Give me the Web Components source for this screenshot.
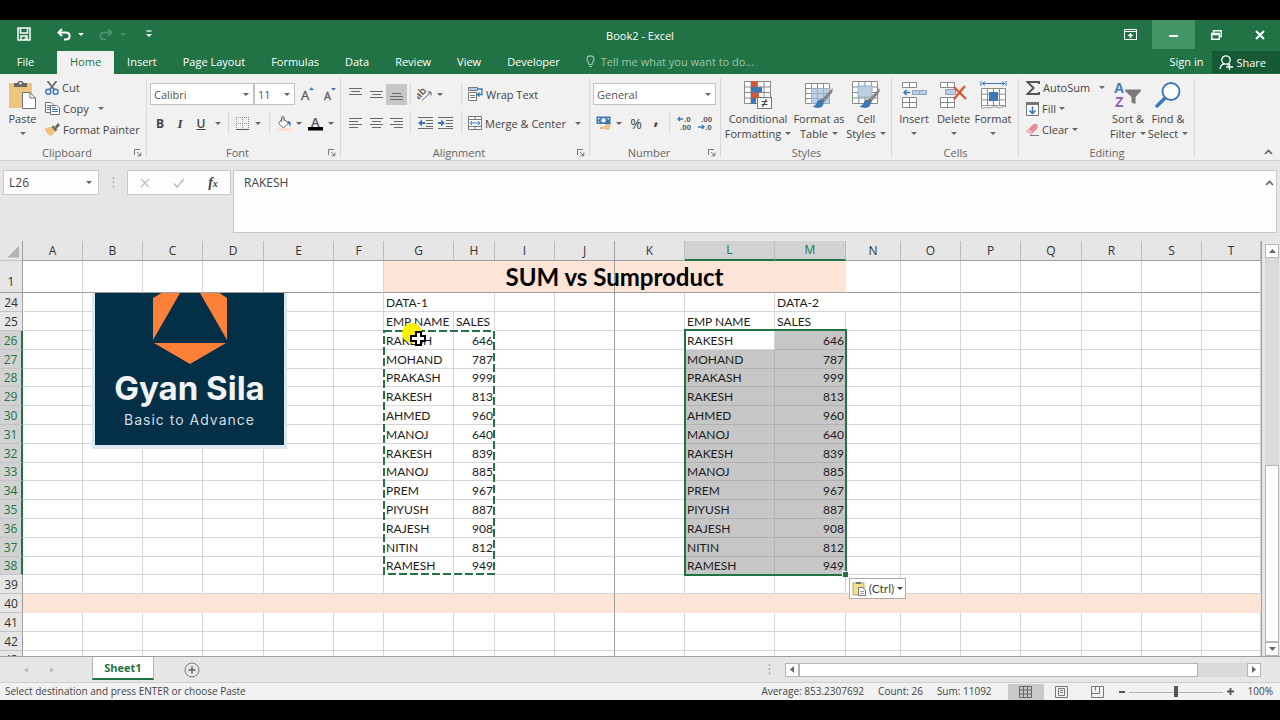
<!DOCTYPE html>
<html lang="en">
<head>
<meta charset="utf-8">
<title>Book2 - Excel</title>
<style>
html, body { margin: 0; height: 100%; }
body { background: #000; font: 11px/15px "Open Sans", "Noto Sans", sans-serif; color: #444; }
</style>
</head>
<body>
<xl-app></xl-app>
<script>
const BASE = `
:host,*{box-sizing:border-box}
button,select,input,textarea{font:inherit;color:inherit;margin:0;border:0;padding:0;background:none;border-radius:0;outline:0}
button{display:flex;align-items:center;justify-content:center}
a{color:inherit;text-decoration:none}
svg{display:block}
.arrow{flex:none;display:block;width:0;height:0;border:3px solid transparent;border-top-color:#666;border-bottom:0}
`;
function define(name, css, html) {
  customElements.define(name, class extends HTMLElement {
    constructor() { super(); this.attachShadow({ mode: 'open' }); }
    connectedCallback() {
      const body = typeof html === 'function' ? html(this) : html;
      this.shadowRoot.innerHTML = `<style>${BASE}${css}</style>${body}`;
    }
  });
}

const B = '#3c78b8';
const lines = (list, c = '#6a6a6a') => list.map(([x1, x2, y]) => `<path d="M${x1} ${y}H${x2}" stroke="${c}" fill="none"/>`).join('');
const grid = (x, y, w, h, nx, ny, c = '#8a8a8a') => {
  let d = '';
  for (let i = 0; i <= nx; i++) d += `M${x + w * i / nx} ${y}V${y + h}`;
  for (let i = 0; i <= ny; i++) d += `M${x} ${y + h * i / ny}H${x + w}`;
  return `<rect x="${x}" y="${y}" width="${w}" height="${h}" fill="#fff"/><path d="${d}" stroke="${c}" fill="none"/>`;
};
const brush = `<path d="M27.500 7L18.500 16.500L20.500 19.500L27.500 11Z" fill="#858585"/><path d="M17.500 17L15.500 19.500L18 22L20.500 19.500Z" fill="#707070"/><path d="M15.500 18.500C11 18.500 13 24 7.500 25.500C12 28 19 27.500 18.500 21.500Z" fill="${B}"/>`;
const ICONS = {
  save: [14, 14, `<path d="M1 1H13V13H1Z M3.500 1V6H10.500V1 M4 13V9H10V13 M8.500 10.500V13" fill="none" stroke="#fff" stroke-width="1.500"/>`],
  undo: [14, 13, `<path d="M5 1L1.500 4.500L5 8M2 4.500H8.500C14 4.500 14 11.500 8.500 11.500H7" fill="none" stroke="#fff" stroke-width="2"/>`],
  redo: [14, 13, `<path d="M9 1L12.500 4.500L9 8M12 4.500H5.500C0 4.500 0 11.500 5.500 11.500H7" fill="none" stroke="#4a8f69" stroke-width="2"/>`],
  customize: [6, 8, `<path d="M.5 1H5.500" stroke="#fff" stroke-width="1.200"/><path d="M0 4H6L3 7Z" fill="#fff"/>`],
  display: [13, 11, `<path d="M.5 .5H12.500V10.500H.5ZM.5 2.500H12.500" fill="none" stroke="#fff"/><path d="M6.500 4L3.500 7H5.700V9H7.300V7H9.500Z" fill="#fff"/>`],
  minimize: [9, 8, `<path d="M0 5H9" stroke="#fff" stroke-width="2"/>`],
  restore: [11, 10, `<path d="M2.500 3V.75H10.250V6.500H8.500M.75 3.500H8.250V9.250H.75ZM.75 4.500H8.250" fill="none" stroke="#fff" stroke-width="1.400"/>`],
  close: [10, 10, `<path d="M1 1L9 9M9 1L1 9" stroke="#fff" stroke-width="2"/>`],
  bulb: [9, 13, `<path d="M3 9.500C3 7.500 1 6.500 1 4.300A3.500 3.500 0 0 1 8 4.300C8 6.500 6 7.500 6 9.500ZM3 11.500H6" fill="none" stroke="#9cc5ae" stroke-width="1.200"/>`],
  person: [14, 15, `<circle cx="7" cy="5" r="4.200" fill="none" stroke="#fff" stroke-width="1.300"/><path d="M1 14C1.500 10.500 3.500 9 5.500 9M8.500 9L10 10.500M7 12H14M10.500 8.500V15" fill="none" stroke="#fff" stroke-width="1.300"/>`],
  paste: [27, 28, `<rect x="0" y="2" width="23" height="25" rx="1" fill="#ecc47c"/><path d="M5 2H8.500C8.500 -.8 14.500 -.8 14.500 2H18V6H5Z" fill="#666"/><circle cx="11.500" cy="2.300" r="1.200" fill="#f1f1f1"/><path d="M13.500 11.500H21L26.500 17V27.500H13.500Z" fill="#fff" stroke="#707070"/><path d="M21 11.500V17H26.500" fill="none" stroke="#707070"/>`],
  cut: [14, 14, `<path d="M2.500 0L9.500 9M11.500 0L4.500 9" stroke="#6a6a6a" stroke-width="1.800"/><circle cx="3.200" cy="10.800" r="2.500" fill="none" stroke="${B}" stroke-width="1.400"/><circle cx="10.600" cy="10.800" r="2.500" fill="none" stroke="${B}" stroke-width="1.400"/>`],
  copy: [15, 13, `<path d="M.5 .5H6L8 2.500V10.500H.5Z" fill="#fff" stroke="#707070"/><path d="M2 3.500H5M2 5.500H5M2 7.500H5" stroke="${B}"/><path d="M5.500 3.500H11.500L14.500 6V12.500H5.500Z" fill="#fff" stroke="#707070"/><path d="M7 7.500H13M7 9.500H13M7 5.500H10.500" stroke="${B}"/>`],
  painter: [15, 13, `<path d="M0 5L5 8L7.500 12.500L4 12.500L0 7Z M1 5L6.500 3.500L11 8L7 12Z" fill="#ecc47c"/><path d="M6.500 4L8.500 2.500L12.500 6.500L10.500 8.500Z M10 3.500L13 0L15 2L12 5.500Z" fill="#666"/>`],
  launcher: [8, 8, `<path d="M.5 6V.5H6M3 3L6.500 6.500M6.800 3.500V6.800H3.500" fill="none" stroke="#777"/>`],
  grow: [13, 14, `<text x="0" y="13" font-size="13" fill="#555" stroke="#555" stroke-width=".3" font-family="Open Sans">A</text><path d="M8 3L10.500 .2L13 3Z" fill="${B}"/>`],
  shrink: [13, 14, `<text x="1" y="13" font-size="11" fill="#555" stroke="#555" stroke-width=".3" font-family="Open Sans">A</text><path d="M8 1L10.500 3.800L13 1Z" fill="${B}"/>`],
  borders: [13, 13, `<path d="M.5 0V12M6.500 0V12M12.500 0V12M0 .5H12.500M0 6.500H12.500" stroke="#888" stroke-dasharray="1 1"/><path d="M0 12.500H13" stroke="#555"/>`],
  fill: [15, 15, `<path d="M5.500 2L11.500 7L6.500 12L1.500 7.500Z" fill="#fff" stroke="#6a6a6a"/><path d="M4.500 6V1.500C4.500 -.2 7 -.2 7 1.500V5" fill="none" stroke="#6a6a6a"/><path d="M10.500 5C14 4.500 14.500 8 13 10.500C12 9 12.500 8 11 7.500Z" fill="${B}"/><rect y="12" width="14" height="3" fill="#fbe0cf"/>`],
  color: [15, 15, `<text x="3" y="11" font-size="13" font-weight="600" fill="#555" font-family="Open Sans">A</text><rect y="11" width="15" height="3.500" fill="#000"/>`],
  top: [13, 13, lines([[0, 13, .5], [2, 11, 3.500], [0, 13, 6.500]])],
  middle: [13, 13, lines([[0, 13, 3.500], [2, 11, 6.500], [0, 13, 9.500]])],
  bottom: [13, 13, lines([[2, 11, 5.500], [0, 13, 8.500], [0, 13, 11.500]])],
  left: [13, 11, lines([[0, 13, .5], [0, 9, 3.500], [0, 13, 6.500], [0, 9, 9.500]])],
  center: [13, 11, lines([[0, 13, .5], [2, 11, 3.500], [0, 13, 6.500], [2, 11, 9.500]])],
  right: [13, 11, lines([[0, 13, .5], [4, 13, 3.500], [0, 13, 6.500], [4, 13, 9.500]])],
  orient: [16, 14, `<text transform="rotate(-45 5 8)" x="-1" y="9" font-size="10" font-weight="600" fill="#555" font-family="Open Sans">ab</text><path d="M5 13.500L14 5M10.500 5H14V8.500" fill="none" stroke="#666"/>`],
  outdent: [15, 12, lines([[0, 15, .5], [8, 15, 3.500], [8, 15, 6.500], [8, 15, 9.500], [0, 15, 11.500]]) + `<path d="M0 6L4 2.500V5H7V7H4V9.500Z" fill="${B}"/>`],
  indent: [15, 12, lines([[0, 15, .5], [8, 15, 3.500], [8, 15, 6.500], [8, 15, 9.500], [0, 15, 11.500]]) + `<path d="M7 6L3 2.500V5H0V7H3V9.500Z" fill="${B}"/>`],
  wrap: [15, 14, `<path d="M.5 .5H9.500V3.500H.5Z" fill="#b7cbe3" stroke="#777"/><path d="M.5 5.500H8.500V13.500H.5Z" fill="#fff" stroke="#777"/><path d="M2 8.500H7M2 10.500H7" stroke="#777"/><path d="M10 2H14V7.500H9.500M11.500 5.500L9.500 7.500L11.500 9.500" fill="none" stroke="${B}" stroke-width="1.300"/>`],
  merge: [14, 14, `<path d="M.5 .5H13.500V13.500H.5ZM.5 3.500H13.500M.5 10.500H13.500M7 .5V3.500M7 10.500V13.500" fill="#fff" stroke="#777"/><path d="M2 7H12M4 5L2 7L4 9M10 5L12 7L10 9" fill="none" stroke="${B}"/>`],
  currency: [16, 14, `<rect x=".5" y=".5" width="14" height="7.500" fill="${B}"/><path d="M2 2H4.500L2 4ZM13 2H10.500L13 4ZM2 6.500V5L4 6.500Z" fill="#dce8f4"/><circle cx="7.500" cy="4.200" r="2.200" fill="#fff"/><path d="M9 8H15V9.500H9ZM8 10H14V11.500H8ZM4 11H8V13H4ZM9 12H13.500V13.500H9Z" fill="#e3b565"/>`],
  incdec: [14, 16, `<g font-size="8" fill="#555" font-family="Liberation Sans" font-weight="bold"><text x="7" y="7">.0</text><text x="3" y="15">.00</text></g><path d="M6 4H1M3 2L1 4L3 6" fill="none" stroke="${B}" stroke-width="1.300"/>`],
  decdec: [14, 16, `<g font-size="8" fill="#555" font-family="Liberation Sans" font-weight="bold"><text x="3" y="7">.00</text><text x="7" y="15">.0</text></g><path d="M0 12H6M4 10L6 12L4 14" fill="none" stroke="${B}" stroke-width="1.300"/>`],
  cond: [29, 28, grid(.5, .5, 26, 22, 4, 4) + `<path d="M7 0H13V6H7ZM7 11.500H15V17H7Z" fill="#d0593b"/><path d="M7 6H18V11.500H7ZM7 17H12V23H7Z" fill="${B}"/><rect x="13.500" y="16.500" width="14" height="11" fill="#fff" stroke="#777"/><path d="M17.500 20.500H23.500M17.500 23.500H23.500M22.500 18L18.500 26" stroke="#444" stroke-width="1.200"/>`],
  table: [29, 28, grid(.5, 2.500, 24, 20, 4, 4) + `<path d="M6.500 7.500H24.500V22.500H6.500Z" fill="#bccfe4"/><path d="M12.500 7.500V22.500M18.500 7.500V22.500M6.500 12.500H24.500M6.500 17.500H24.500" stroke="#96b0cd"/>` + brush],
  cell: [29, 28, grid(.5, .5, 25, 22, 4, 4) + `<rect x="6" y="5" width="14" height="11" fill="#bccfe4" stroke="#96b0cd"/>` + brush],
  insert: [25, 26, grid(.5, .5, 14, 5, 2, 1) + grid(.5, 15.500, 14, 10, 2, 2) + `<path d="M10.500 8.500H24.500V12.500H10.500ZM17.500 8.500V12.500" fill="#bccfe4" stroke="#8da3bd"/><path d="M8 10.500H2M4.500 8L2 10.500L4.500 13" fill="none" stroke="${B}" stroke-width="1.500"/>`],
  delete: [27, 26, grid(.5, .5, 14, 5, 2, 1) + grid(.5, 15.500, 14, 10, 2, 2) + `<path d="M5.500 7.500H15.500V12.500H5.500Z" fill="#bccfe4" stroke="#8da3bd"/><path d="M14 5L26 17M25 4L14 17" stroke="#d9532f" stroke-width="2.200"/>`],
  format: [27, 28, `<path d="M1 0V5M26 0V5M2 2.500H25M5 .5L2.500 2.500L5 4.500M22 .5L24.500 2.500L22 4.500" fill="none" stroke="${B}"/>` + grid(1.500, 7.500, 24, 17, 4, 3) + `<rect x="9" y="11" width="9" height="9" fill="${B}"/><path d="M1.500 24.500H25.500V26C22 24.500 20 28 17 26C13 24.500 11 28 8 26.500C5 25.500 4 28 1.500 27Z" fill="#fff" stroke="#999"/>`],
  sum: [14, 14, `<path d="M13 3V1H1.500L7.500 7L1.500 13H13V11" fill="none" stroke="#555" stroke-width="1.900"/>`],
  filldown: [13, 14, `<path d="M.5 .5H12.500V13.500H.5Z" fill="#fff" stroke="#777"/><rect width="13" height="3" fill="#777"/><path d="M6.500 4.500V12M3.500 8.500L6.500 11.500L9.500 8.500" fill="none" stroke="${B}" stroke-width="1.600"/>`],
  clear: [13, 12, `<path d="M7.500 0H11.500V4L5.500 11L0 7.500Z" fill="#e78b9b"/><path d="M0 7.500L2.500 5L7.500 8.500L5.500 11Z" fill="#f3bcc5"/><path d="M4 11.500H13" stroke="#777"/>`],
  sort: [28, 26, `<g font-size="14" font-weight="bold" font-family="Liberation Sans"><text x="0" y="11" fill="${B}">A</text><text x="1" y="25" fill="#8e5bb5">Z</text></g><path d="M11 7.500H27V9L21.500 15V22L17.500 20.500V15L11 9Z" fill="#7a7a7a"/>`],
  find: [26, 26, `<path d="M10 16L2 24" stroke="${B}" stroke-width="3.500" stroke-linecap="round"/><circle cx="16" cy="9.500" r="8.500" fill="#fff" stroke="${B}" stroke-width="1.800"/>`],
  chevron: [9, 6, `<path d="M1 5L4.500 1.500L8 5" fill="none" stroke="#666" stroke-width="1.700"/>`],
  cancel: [10, 10, `<path d="M1 1L9 9M9 1L1 9" stroke="#c2c2c2" stroke-width="1.400"/>`],
  enter: [12, 10, `<path d="M1 5.500L4 9L11 1" fill="none" stroke="#c2c2c2" stroke-width="1.800"/>`],
  dots: [3, 11, `<path d="M1.500 0V11" stroke="#a8a8a8" stroke-width="1.500" stroke-dasharray="2 2.300"/>`],
  plus: [16, 16, `<circle cx="8" cy="8" r="7" fill="none" stroke="#777"/><path d="M4.500 8H11.500M8 4.500V11.500" stroke="#666" stroke-width="1.600"/>`],
  navl: [4, 6, `<path d="M4 0V6L0 3Z" fill="#bdbdbd"/>`],
  navr: [4, 6, `<path d="M0 0V6L4 3Z" fill="#bdbdbd"/>`],
  barl: [4, 7, `<path d="M4 0V7L0 3.500Z" fill="#666"/>`],
  barr: [4, 7, `<path d="M0 0V7L4 3.500Z" fill="#666"/>`],
  baru: [7, 4, `<path d="M0 4H7L3.500 0Z" fill="#666"/>`],
  bard: [7, 4, `<path d="M0 0H7L3.500 4Z" fill="#666"/>`],
  normal: [13, 12, `<path d="M.5 .5H12.500V11.500H.5ZM4.500 .5V11.500M8.500 .5V11.500M.5 4H12.500M.5 8H12.500" fill="none" stroke="#666"/>`],
  pagelayout: [13, 12, `<path d="M.5 .5H12.500V11.500H.5ZM3.500 2.500H9.500V9.500H3.500ZM5 4.500H8M5 6.500H8" fill="none" stroke="#777"/>`],
  pagebreak: [13, 12, `<path d="M.5 .5H12.500V11.500H.5ZM.5 7.500H8.500V.5M4.500 .5V4.500" fill="none" stroke="#777"/>`],
  minus: [6, 2, `<path d="M0 1H6" stroke="#555" stroke-width="2"/>`],
  zoomin: [7, 7, `<path d="M0 3.500H7M3.500 0V7" stroke="#555" stroke-width="1.800"/>`],
  clip: [14, 15, `<path d="M1 2H12V14H1Z" fill="#f2e08a" stroke="#b9a75a"/><path d="M4 3V1H9V3Z" fill="#777"/><path d="M6.500 6.500H10.500L13.500 9V14.500H6.500Z" fill="#fff" stroke="#777"/><path d="M8 10.500H12M8 12.500H12" stroke="#999"/>`],
  selectall: [13, 12, `<path d="M12 0V11.500H.5Z" fill="#b2b2b2"/>`],
};

define('xl-icon', `:host{display:block;flex:none}`, el => {
  const [w, h, body] = ICONS[el.getAttribute('name')];
  return `<svg width="${w}" height="${h}" viewBox="0 0 ${w} ${h}" aria-hidden="true">${body}</svg>`;
});

/* A ribbon command: an icon with an optional label, laid out small (in a row) or big (stacked). */
define('xl-command', `
:host{display:block;flex:none}
button{width:100%;height:21px;gap:3px;white-space:nowrap}
:host([on]) button{background:#c6c6c6}
:host([start]) button{justify-content:flex-start}
:host([wide]) .arrow{margin-left:6px}
:host([big]) button{flex-direction:column;gap:0;height:auto;justify-content:flex-start}
.pic{height:32px;display:flex;align-items:center}
.line{display:flex;height:15px;gap:4px;align-items:center;justify-content:center}
`, el => {
  const label = el.getAttribute('label') || '', icon = el.getAttribute('icon');
  const tag = `aria-label="${el.getAttribute('title') || label}"`;
  const pic = icon ? `<xl-icon name="${icon}"></xl-icon>` : '';
  const arrow = el.hasAttribute('arrow') ? '<i class="arrow"></i>' : '';
  if (el.hasAttribute('big')) {
    const [a, b = ''] = label.split('|');
    return `<button type="button"><span class="pic">${pic}</span><span class="line">${a}</span><span class="line">${b}${arrow}</span></button>`;
  }
  return `<button type="button" ${label ? '' : tag}>${pic}${label ? `<span>${label}</span>` : '<slot></slot>'}${arrow}</button>`;
});

define('xl-group', `
:host{display:flex;flex-direction:column;flex:none;position:relative;height:86px;padding-top:3px}
:host::after{content:"";position:absolute;right:0;top:4px;bottom:3px;width:1px;background:#d8d8d8}
.body{flex:1;min-height:0}
footer{display:flex;height:15px;align-items:center;color:#666}
footer span{flex:1;text-align:center}
footer xl-icon{width:13px}
`, el => `<div class="body"><slot></slot></div><footer><span>${el.getAttribute('label')}</span>${el.hasAttribute('launcher') ? '<xl-icon name="launcher"></xl-icon>' : ''}</footer>`);

define('xl-title-bar', `
:host{display:grid;grid-template-columns:1fr auto 1fr;height:30px;background:#217346;color:#fff}
.quick{display:grid;grid-template-columns:47px 47px 36px 38px;height:28px}
.quick button{gap:7px}
.quick .arrow{border-top-color:#fff}
.quick .dim .arrow{border-top-color:#4a8f69}
h1{margin:0;font:inherit;align-self:center}
.win{display:flex;justify-content:flex-end}
.win button{width:43px;height:29px}
.win .hot{background:#439467}
.win button:last-child{width:42px;padding-left:2px}
`, `
<div class="quick">
<button type="button" aria-label="Save"><xl-icon name="save"></xl-icon></button>
<button type="button" aria-label="Undo"><xl-icon name="undo"></xl-icon><i class="arrow"></i></button>
<button type="button" aria-label="Redo" class="dim"><xl-icon name="redo"></xl-icon><i class="arrow"></i></button>
<button type="button" aria-label="Customize"><xl-icon name="customize"></xl-icon></button>
</div>
<h1>Book2 - Excel</h1>
<div class="win">
<button type="button" aria-label="Ribbon display options"><xl-icon name="display"></xl-icon></button>
<button type="button" aria-label="Minimize" class="hot"><xl-icon name="minimize"></xl-icon></button>
<button type="button" aria-label="Restore"><xl-icon name="restore"></xl-icon></button>
<button type="button" aria-label="Close"><xl-icon name="close"></xl-icon></button>
</div>`);

define('xl-tabs', `
:host{display:flex;justify-content:space-between;height:24px;background:#217346;color:#fff}
nav,.account{display:flex}
nav a{display:flex;align-items:center;padding:0 13px 2px}
nav .file{padding:0 0 2px;width:51px;margin-right:6px;justify-content:center}
nav .home{background:#f1f1f1;color:#217346;margin-top:1px}
.tell{display:flex;align-items:center;gap:6px;padding:0 0 2px 13px;color:#9cc5ae}
.account a{display:flex;align-items:center;gap:3px;padding:0 9px 2px}
.account .share{background:#165a34;padding:0 14px 0 7px;height:22px;margin-top:1px}
`, `
<nav><a href="#file" class="file">File</a><a href="#home" class="home">Home</a>
${['Insert', 'Page Layout', 'Formulas', 'Data', 'Review', 'View', 'Developer'].map(t => `<a href="#${t}">${t}</a>`).join('')}
<span class="tell"><xl-icon name="bulb"></xl-icon>Tell me what you want to do...</span></nav>
<div class="account"><a href="#signin">Sign in</a><a href="#share" class="share"><xl-icon name="person"></xl-icon>Share</a></div>`);

define('xl-combo', `
:host{display:grid;height:22px;background:#fff;border:1px solid #c3c3c3}
select,i{grid-area:1/1}
select{appearance:none;width:100%;padding-left:3px;color:#555}
i{align-self:center;justify-self:end;margin-right:4px;pointer-events:none}
`, el => `<select aria-label="${el.getAttribute('label')}"><option>${el.getAttribute('value')}</option></select><i class="arrow"></i>`);

define('xl-ribbon', `
:host{display:flex;flex:none;height:87px;background:#f1f1f1;border-bottom:1px solid #d2d2d2}
.clip{width:147px}.font{width:194px}.align{width:249px}.number{width:131px}
.styles{width:171px}.cells{width:127px}.edit{width:176px}
.cols{display:grid}
.row{display:grid;align-items:center;padding-left:3px;height:22px}
.align .row{padding-left:4px}
.row + .row{margin-top:7px}
.row:first-child{margin-top:6px}
.stack{display:grid;grid-auto-rows:21px;align-content:start}
.sep{width:1px;height:22px;background:#d8d8d8;justify-self:center}
.arrow{justify-self:center}
.big{padding-top:2px}
.collapse{margin:0 7px 5px auto;align-self:flex-end}
b,em,u{font-size:12px}
em{font-family:"Liberation Serif",serif;font-weight:bold;font-size:13px}
u{font-weight:600}
.pct{font-size:14px}.comma{font-size:18px;font-weight:bold;padding-bottom:10px}
`, `
<xl-group class="clip" label="Clipboard" launcher>
 <div class="cols" style="grid-template-columns:45px 1fr">
  <xl-command big class="big" icon="paste" label="Paste" arrow></xl-command>
  <div class="stack">
   <xl-command start icon="cut" label="Cut"></xl-command>
   <xl-command start wide icon="copy" label="Copy" arrow></xl-command>
   <xl-command start icon="painter" label="Format Painter"></xl-command>
  </div>
 </div>
</xl-group>
<xl-group class="font" label="Font" launcher>
 <div class="row" style="grid-template-columns:104px 41px 24px 20px">
  <xl-combo label="Font" value="Calibri"></xl-combo><xl-combo label="Font size" value="11"></xl-combo>
  <xl-command icon="grow" title="Increase font size"></xl-command><xl-command icon="shrink" title="Decrease font size"></xl-command>
 </div>
 <div class="row" style="grid-template-columns:20px 20px 22px 11px 10px 18px 14px 8px 22px 8px 24px 8px">
  <xl-command title="Bold"><b>B</b></xl-command><xl-command title="Italic"><em>I</em></xl-command><xl-command title="Underline"><u>U</u></xl-command><i class="arrow"></i>
  <i class="sep"></i><xl-command icon="borders" title="Borders"></xl-command><i class="arrow"></i>
  <i class="sep"></i><xl-command icon="fill" title="Fill color"></xl-command><i class="arrow"></i>
  <xl-command icon="color" title="Font color"></xl-command><i class="arrow"></i>
 </div>
</xl-group>
<xl-group class="align" label="Alignment" launcher>
 <div class="row" style="grid-template-columns:21px 20px 21px 7px 22px 8px 11px 13px 1fr">
  <xl-command icon="top" title="Top align"></xl-command><xl-command icon="middle" title="Middle align"></xl-command><xl-command on icon="bottom" title="Bottom align"></xl-command>
  <i class="sep"></i><xl-command icon="orient" title="Orientation"></xl-command><i class="arrow"></i><i></i><i class="sep"></i>
  <xl-command start icon="wrap" label="Wrap Text"></xl-command>
 </div>
 <div class="row" style="grid-template-columns:21px 20px 21px 7px 22px 19px 13px 1fr">
  <xl-command icon="left" title="Align left"></xl-command><xl-command icon="center" title="Center"></xl-command><xl-command icon="right" title="Align right"></xl-command>
  <i class="sep"></i><xl-command icon="outdent" title="Decrease indent"></xl-command><xl-command icon="indent" title="Increase indent"></xl-command><i class="sep"></i>
  <xl-command start wide icon="merge" label="Merge &amp;amp; Center" arrow></xl-command>
 </div>
</xl-group>
<xl-group class="number" label="Number" launcher>
 <div class="row" style="grid-template-columns:123px"><xl-combo label="Number format" value="General"></xl-combo></div>
 <div class="row" style="grid-template-columns:22px 8px 26px 14px 12px 18px 24px">
  <xl-command icon="currency" title="Accounting format"></xl-command><i class="arrow"></i>
  <xl-command title="Percent style"><span class="pct">%</span></xl-command><xl-command title="Comma style"><span class="comma">,</span></xl-command>
  <i class="sep"></i><xl-command icon="incdec" title="Increase decimal"></xl-command><xl-command icon="decdec" title="Decrease decimal"></xl-command>
 </div>
</xl-group>
<xl-group class="styles" label="Styles">
 <div class="cols big" style="grid-template-columns:74px 48px 46px">
  <xl-command big icon="cond" label="Conditional|Formatting" arrow></xl-command>
  <xl-command big icon="table" label="Format as|Table" arrow></xl-command>
  <xl-command big icon="cell" label="Cell|Styles" arrow></xl-command>
 </div>
</xl-group>
<xl-group class="cells" label="Cells">
 <div class="cols big" style="grid-template-columns:44px 35px 44px">
  <xl-command big icon="insert" label="Insert" arrow></xl-command>
  <xl-command big icon="delete" label="Delete" arrow></xl-command>
  <xl-command big icon="format" label="Format" arrow></xl-command>
 </div>
</xl-group>
<xl-group class="edit" label="Editing">
 <div class="cols" style="grid-template-columns:7px 82px 40px 40px">
  <i></i>
  <div class="stack">
   <xl-command start wide icon="sum" label="AutoSum" arrow></xl-command>
   <xl-command start icon="filldown" label="Fill" arrow></xl-command>
   <xl-command start icon="clear" label="Clear" arrow></xl-command>
  </div>
  <xl-command big class="big" icon="sort" label="Sort &amp;amp;|Filter" arrow></xl-command>
  <xl-command big class="big" icon="find" label="Find &amp;amp;|Select" arrow></xl-command>
 </div>
</xl-group>
<xl-icon class="collapse" name="chevron"></xl-icon>`);

define('xl-formula-bar', `
:host{display:flex;flex:none;align-items:flex-start;background:#e6e6e6;padding:9px 3px 8px;height:80px;font-size:12px}
.name{display:flex;align-items:center;width:96px;height:25px;border:1px solid #c8c8c8;background:#fdfdfd;padding-right:6px}
input{flex:1;min-width:0;padding-left:5px}
.grip{margin:7px 12px 0 13px}
.tools{display:grid;grid-template-columns:34px 34px 34px;width:104px;height:25px;border:1px solid #c8c8c8;background:#fdfdfd;margin-right:2px}
.fx{font:italic bold 14px/15px "Liberation Serif",serif}
.fx small{font-size:10px}
.field{flex:1;display:flex;height:63px;border:1px solid #c8c8c8;background:#fdfdfd;padding:4px 2px 0 10px}
textarea{flex:1;resize:none;height:50px;overflow:hidden}
.field xl-icon{margin-top:5px}
`, `
<div class="name"><input aria-label="Name box" value="L26"><i class="arrow"></i></div>
<xl-icon class="grip" name="dots"></xl-icon>
<div class="tools"><button type="button" aria-label="Cancel"><xl-icon name="cancel"></xl-icon></button><button type="button" aria-label="Enter"><xl-icon name="enter"></xl-icon></button><button type="button" aria-label="Insert function"><span class="fx">f<small>x</small></span></button></div>
<div class="field"><textarea aria-label="Formula">RAKESH</textarea><xl-icon name="chevron"></xl-icon></div>`);

define('xl-logo', `
:host{display:block;width:195px;height:156px;background:#dce8f0;padding:0 3px 4px}
div{height:152px;background:#033047;color:#f1f3f4;text-align:center;display:flex;flex-direction:column;align-items:center}
strong{font:bold 33px/36px Inter,sans-serif;margin-top:6px}
span{font:14px/18px Inter,sans-serif;letter-spacing:1px;margin-top:5px;color:#d5dde2}
`, `<div><svg width="76" height="71" viewBox="0 0 76 71"><g fill="#fd8038"><path d="M9.500 0H28L1 47V5Z"/><path d="M67.500 0H48L75 47V5Z"/><path d="M2 50H74L38 71Z"/></g></svg><strong>Gyan Sila</strong><span>Basic to Advance</span></div>`);

define('xl-marquee', `:host{display:block}svg{width:100%;height:100%;overflow:visible}`,
  `<svg><rect width="100%" height="100%" fill="none" stroke="#fff" stroke-width="2"/><rect width="100%" height="100%" fill="none" stroke="#217346" stroke-width="2" stroke-dasharray="8 3"/></svg>`);

define('xl-pointer', `:host{display:block}`,
  `<svg width="28" height="26" viewBox="0 0 28 26"><circle cx="11" cy="11" r="10" fill="#fdf000"/><path d="M15 10H20V14H24V19H20V23H15V19H10V14H15Z" fill="#fff" stroke="#000" stroke-width="2"/></svg>`);

define('xl-paste-options', `
:host{display:block}
button{width:57px;height:21px;border:1px solid #ababab;background:#fff;gap:3px;color:#444}
.arrow{border-top-color:#444}
`, `<button type="button"><xl-icon name="clip"></xl-icon>(Ctrl)<i class="arrow"></i></button>`);

const COLS = { A: 60, B: 60, C: 60, D: 61, E: 70, F: 50, G: 70, H: 41, I: 60, J: 60, K: 70, L: 90, M: 71, N: 55, O: 60, P: 60, Q: 61, R: 60, S: 60, T: 60 };
const SALES = [['RAKESH', 646], ['MOHAND', 787], ['PRAKASH', 999], ['RAKESH', 813], ['AHMED', 960], ['MANOJ', 640], ['RAKESH', 839], ['MANOJ', 885], ['PREM', 967], ['PIYUSH', 887], ['RAJESH', 908], ['NITIN', 812], ['RAMESH', 949]];
function cellsOf(row) {
  const names = Object.keys(COLS);
  let out = '';
  for (let i = 0; i < names.length; i++) {
    const c = names[i], rec = SALES[row - 26];
    let text = '', cls = [], span = 1;
    if (c === 'J') cls.push('freeze');
    if (row === 24 && c === 'G') { text = 'DATA-1'; span = 2; }
    if (row === 24 && c === 'M') { text = 'DATA-2'; span = 2; }
    if (row === 24 && c === 'B') { text = '<xl-logo class="logo"></xl-logo>'; cls.push('anchor'); }
    if (row === 25 && (c === 'G' || c === 'L')) text = 'EMP NAME';
    if (row === 25 && (c === 'H' || c === 'M')) text = 'SALES';
    if (rec && (c === 'G' || c === 'L')) text = rec[0];
    if (rec && (c === 'H' || c === 'M')) { text = rec[1]; cls.push('num'); }
    if (rec && (c === 'L' || c === 'M') && !(row === 26 && c === 'L')) cls.push('sel');
    if (row === 26 && c === 'G') { text += '<xl-marquee class="ants"></xl-marquee><xl-pointer class="pointer"></xl-pointer>'; cls.push('anchor'); }
    if (row === 26 && c === 'L') { text += '<span class="box"></span>'; cls.push('anchor'); }
    if (row === 39 && c === 'N') { text = '<xl-paste-options class="paste"></xl-paste-options>'; cls.push('anchor'); }
    out += `<td${span > 1 ? ` colspan="${span}"` : ''} class="${cls.join(' ')}">${text}</td>`;
    i += span - 1;
  }
  return out;
}
const ROWS = Array.from({ length: 20 }, (_, i) => i + 24);

define('xl-sheet', `
:host{display:flex;flex:1 1 0;min-height:0;overflow:hidden;background:#e6e6e6;border-bottom:1px solid #9e9e9e}
.view{flex:1;min-width:0;overflow:hidden;border-right:1px solid #9e9e9e}
table{--block:244px;table-layout:fixed;border-collapse:separate;border-spacing:0;width:100%;background:#fff;font:12px/17px Lato,sans-serif;color:#1c1c1c}
th,td{padding:0;font-weight:normal;white-space:nowrap;border:0 solid #d6d6d6;border-width:0 1px 1px 0}
td{padding-left:2px;text-align:left}
thead th{height:20px;background:#e6e6e6;border-color:#bcbcbc;border-bottom-color:#9e9e9e;font:12px/18px "Open Sans",sans-serif;color:#333}
.corner{padding:2px 2px 0 7px}
.cols .on{background:#d2d2d2;color:#217346;border-bottom:2px solid #217346}
.cols .freeze,.freeze{border-right-color:#9e9e9e}
tbody tr{height:19px}
tbody tr:nth-child(5n){height:18px}
tbody td,tbody th{line-height:15px}
tr th:first-child{background:#e6e6e6;border-color:#c4c4c4;border-right-color:#9e9e9e;font:12px/15px "Open Sans",sans-serif;color:#333}
tbody .on th:first-child{background:#d2d2d2;color:#217346;border-right:2px solid #217346}
.first{height:32px}
.first th,.first td{border-bottom-color:#9e9e9e}
.first th:first-child{vertical-align:bottom;padding-bottom:3px;border-bottom-color:#9e9e9e}
.first .title{background:linear-gradient(#9e9e9e,#9e9e9e) 230px 0/1px 100% no-repeat #fce4d6;font:bold 24px/31px Lato,sans-serif;text-align:center;color:#000;padding:0;border-right-color:#fce4d6}
.band td{background:#fce4d6;border-color:#fce4d6}
.band .freeze{border-right-color:#9e9e9e}
.num{text-align:right;padding-right:1px}
.sel{background:#c6c6c6;border-color:#b2b2b2}
.anchor{position:relative}
.logo{position:absolute;z-index:1;left:9px;top:0}
.ants{position:absolute;z-index:1;left:0;top:0;width:calc(100% + 41px);height:calc(var(--block) - 1px)}
.pointer{position:absolute;z-index:2;left:17px;top:-9px}
.box{position:absolute;z-index:1;left:-1px;top:-2px;width:calc(100% + 74px);height:calc(var(--block) + 3px);border:2px solid #217346}
.box::after{content:"";position:absolute;right:-3px;bottom:-3px;width:5px;height:5px;background:#217346;border:solid #fff;border-width:1px 0 0 1px}
.paste{position:absolute;z-index:1;left:3px;top:3px}
.scroll{width:18px;padding:3px 1px 0 3px;display:flex;flex-direction:column}
.scroll button{width:14px;height:14px;flex:none;border:1px solid #b5b5b5;background:#fff}
.track{flex:1;background:#dadada;display:flex;flex-direction:column;justify-content:flex-end}
.thumb{height:46%;background:#fff;border:1px solid #b5b5b5}
`, `
<div class="view"><table>
<colgroup><col style="width:23px">${Object.entries(COLS).map(([c, w]) => `<col${c === 'T' ? '' : ` style="width:${w}px"`}>`).join('')}</colgroup>
<thead><tr class="cols"><th class="corner" aria-label="Select all"><xl-icon name="selectall"></xl-icon></th>${Object.keys(COLS).map(c => `<th scope="col" class="${c === 'L' || c === 'M' ? 'on' : c === 'J' ? 'freeze' : ''}">${c}</th>`).join('')}</tr>
<tr class="first"><th scope="row">1</th>${'<td></td>'.repeat(6)}<td class="title" colspan="7">SUM vs Sumproduct</td>${'<td></td>'.repeat(7)}</tr></thead>
<tbody>${ROWS.map(r => `<tr class="${r >= 26 && r <= 38 ? 'on' : r === 40 ? 'band' : ''}"><th scope="row">${r}</th>${cellsOf(r)}</tr>`).join('')}</tbody>
</table></div>
<div class="scroll"><button type="button" aria-label="Scroll up"><xl-icon name="baru"></xl-icon></button><div class="track"><div class="thumb"></div></div><button type="button" aria-label="Scroll down"><xl-icon name="bard"></xl-icon></button></div>`);

define('xl-sheet-tabs', `
:host{display:flex;flex:none;align-items:center;height:26px;background:#e6e6e6;border-bottom:1px solid #cfcfcf}
.nav{display:grid;grid-template-columns:26px 26px;padding-left:13px;width:92px}
.tab{align-self:flex-start;width:62px;height:23px;background:#fff;border:1px solid #b5b5b5;border-top:0;border-bottom:2px solid #217346;color:#217346;font-weight:bold;display:flex;justify-content:center;align-items:center}
.add{width:76px}
.bar{margin:0 19px 0 auto;display:flex;align-items:center;gap:14px;width:calc(40% - 19px)}
.rail{flex:1;display:flex;height:14px;background:#dadada}
.rail button{width:14px;flex:none;border:1px solid #b5b5b5;background:#fff}
.rail div{flex:1;display:flex}
.rail div i{width:89%;background:#fff;border:1px solid #b5b5b5}
`, `
<div class="nav"><button type="button" aria-label="Previous sheet"><xl-icon name="navl"></xl-icon></button><button type="button" aria-label="Next sheet"><xl-icon name="navr"></xl-icon></button></div>
<a class="tab" href="#sheet1">Sheet1</a>
<button type="button" class="add" aria-label="New sheet"><xl-icon name="plus"></xl-icon></button>
<div class="bar"><xl-icon name="dots"></xl-icon><div class="rail"><button type="button" aria-label="Scroll left"><xl-icon name="barl"></xl-icon></button><div><i></i></div><button type="button" aria-label="Scroll right"><xl-icon name="barr"></xl-icon></button></div></div>`);

define('xl-status-bar', `
:host{display:flex;flex:none;align-items:center;justify-content:space-between;height:17px;background:#f1f1f1;padding:0 7px 0 5px;font-size:10px}
.right{display:flex;align-items:center;gap:14px}
.views{display:grid;grid-template-columns:36px 36px 36px;margin-left:2px}
.views button{height:16px}
.views .on{background:#c9c9c9}
.zoom{display:flex;align-items:center;gap:4px;margin-left:-11px}
input{appearance:none;width:94px;height:12px;background:linear-gradient(#b0b0b0,#b0b0b0) 0 6px/100% 1px no-repeat}
input::-webkit-slider-thumb{appearance:none;width:4px;height:11px;background:#555}
`, `
<span>Select destination and press ENTER or choose Paste</span>
<div class="right"><span>Average: 853.2307692</span><span>Count: 26</span><span>Sum: 11092</span>
<div class="views"><button type="button" class="on" aria-label="Normal"><xl-icon name="normal"></xl-icon></button><button type="button" aria-label="Page layout"><xl-icon name="pagelayout"></xl-icon></button><button type="button" aria-label="Page break preview"><xl-icon name="pagebreak"></xl-icon></button></div>
<div class="zoom"><button type="button" aria-label="Zoom out"><xl-icon name="minus"></xl-icon></button><input type="range" aria-label="Zoom" value="50"><button type="button" aria-label="Zoom in"><xl-icon name="zoomin"></xl-icon></button></div>
<span>100%</span></div>`);

define('xl-app', `:host{display:flex;flex-direction:column;height:100vh;padding:20px 0}`, `
<xl-title-bar></xl-title-bar><xl-tabs></xl-tabs><xl-ribbon></xl-ribbon><xl-formula-bar></xl-formula-bar><xl-sheet></xl-sheet><xl-sheet-tabs></xl-sheet-tabs><xl-status-bar></xl-status-bar>`);
</script>
</body>
</html>
